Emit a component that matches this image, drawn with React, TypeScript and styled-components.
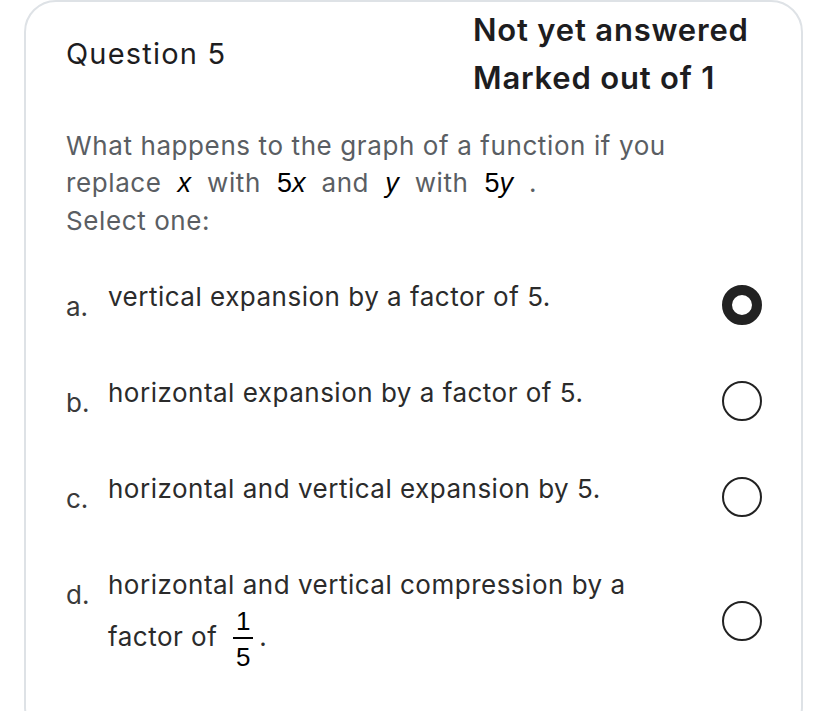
import React from "react";
import styled, { createGlobalStyle } from "styled-components";

const Global = createGlobalStyle`
  html, body { margin: 0; padding: 0; background: #ffffff; }
  body { font-family: Inter, "Noto Sans", sans-serif; -webkit-font-smoothing: antialiased; }
`;

const Page = styled.div`
  padding: 0 25px 0 24px;
`;

const Card = styled.section`
  border: 2px solid #dee2e6;
  border-radius: 32px;
  padding: 4px 39px 40px 40px;
  min-height: 740px;
  box-sizing: border-box;
`;

const Header = styled.header`
  display: flex;
  align-items: center;
  justify-content: space-between;
`;

const QTitle = styled.h2`
  margin: 0;
  font-size: 29px;
  line-height: 34px;
  font-weight: 400;
  letter-spacing: 1.2px;
  color: #1d1d1f;
`;

const Status = styled.div`
  width: 289px;
  font-size: 31px;
  line-height: 48px;
  font-weight: 600;
  color: #1d1d1f;
  letter-spacing: 0.8px;
`;

const Prompt = styled.div`
  margin-top: 25px;
  font-size: 26px;
  line-height: 37px;
  letter-spacing: 0.6px;
  color: #5a5e63;
`;

const Math = styled.span`
  font-family: "Liberation Sans", Arial, sans-serif;
  color: #000;
  margin: 0 16px;
  font-size: 27px;
  letter-spacing: 0;
`;

const Var = styled.i`
  font-style: italic;
`;

const Options = styled.div`
  margin-top: 15px;
  display: flex;
  flex-direction: column;
`;

const Row = styled.label`
  display: flex;
  align-items: center;
  justify-content: space-between;
  padding: 24px 0 25px;
`;

const Label = styled.div`
  display: flex;
  align-items: flex-start;
`;

const Letter = styled.span`
  width: 42px;
  flex: none;
  padding-top: 10px;
  font-size: 26px;
  line-height: 37px;
  color: #3a3a3a;
`;

const Text = styled.div`
  font-size: 26px;
  line-height: 37px;
  letter-spacing: 0.5px;
  color: #2b2b2b;
  max-width: 560px;
`;

const Radio = styled.span<{ $checked?: boolean }>`
  flex: none;
  width: 40px;
  height: 40px;
  border-radius: 50%;
  box-sizing: border-box;
  margin-top: 6px;
  background: #fff;
  border: ${(p) => (p.$checked ? "10px" : "2.5px")} solid #222;
`;

const Frac = styled.span`
  display: inline-flex;
  flex-direction: column;
  align-items: center;
  vertical-align: middle;
  margin: 0 6px 0 16px;
  font-family: "Liberation Sans", Arial, sans-serif;
  color: #000;
  font-size: 26px;
  line-height: 26px;
  letter-spacing: 0;
`;

const Bar = styled.span`
  display: block;
  width: 20px;
  height: 2px;
  background: #000;
  margin: 3px 0 5px;
`;

const Line2 = styled.span`
  display: inline-block;
  margin-top: 5px;
`;

export default function App() {
  return (
    <Page>
      <Global />
      <Card>
        <Header>
          <QTitle>Question 5</QTitle>
          <Status>
            <div>Not yet answered</div>
            <div>Marked out of 1</div>
          </Status>
        </Header>
        <Prompt>
          What happens to the graph of a function if you
          <br />
          replace
          <Math>
            <Var>x</Var>
          </Math>
          with
          <Math>
            5<Var>x</Var>
          </Math>
          and
          <Math>
            <Var>y</Var>
          </Math>
          with
          <Math>
            5<Var>y</Var>
          </Math>
          .
          <br />
          Select one:
        </Prompt>
        <Options>
          <Row>
            <Label>
              <Letter>a.</Letter>
              <Text>vertical expansion by a factor of 5.</Text>
            </Label>
            <Radio $checked />
          </Row>
          <Row>
            <Label>
              <Letter>b.</Letter>
              <Text>horizontal expansion by a factor of 5.</Text>
            </Label>
            <Radio />
          </Row>
          <Row>
            <Label>
              <Letter>c.</Letter>
              <Text>horizontal and vertical expansion by 5.</Text>
            </Label>
            <Radio />
          </Row>
          <Row>
            <Label>
              <Letter>d.</Letter>
              <Text>
                horizontal and vertical compression by a
                <br />
                <Line2>
                  factor of
                  <Frac>
                    <span>1</span>
                    <Bar />
                    <span>5</span>
                  </Frac>
                  .
                </Line2>
              </Text>
            </Label>
            <Radio />
          </Row>
        </Options>
      </Card>
    </Page>
  );
}
